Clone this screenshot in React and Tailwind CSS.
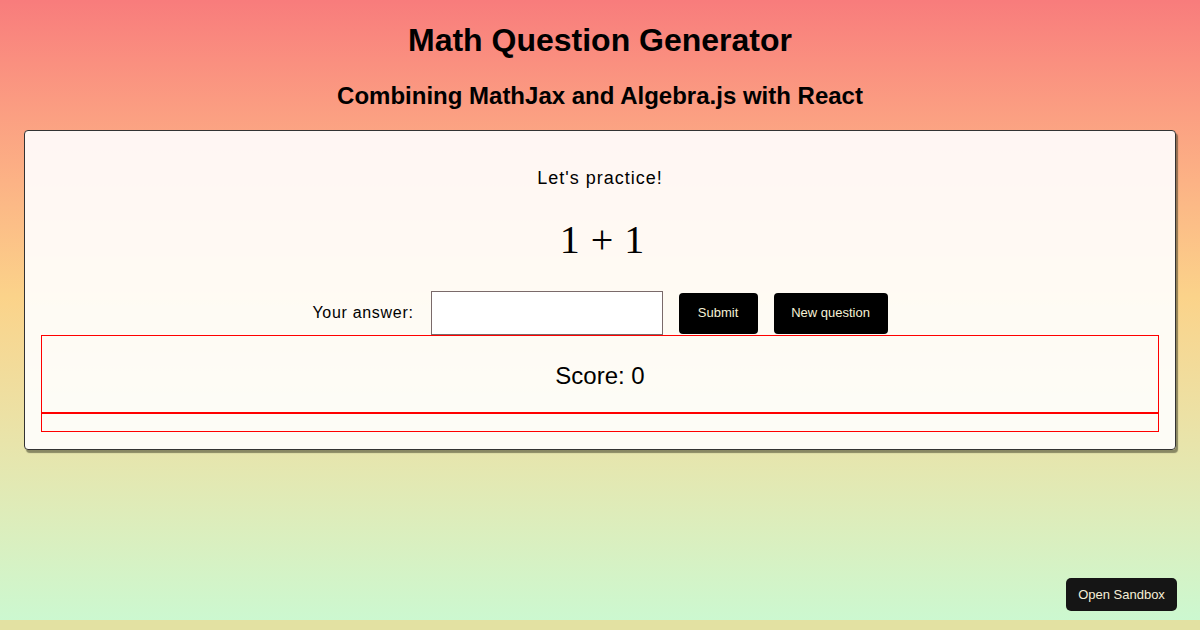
export default function App() {
  return (
    <div className="relative min-h-screen bg-[#e3e1a2] font-['Liberation_Sans',Arial,sans-serif] text-black">
      <div className="h-[620px] bg-gradient-to-b from-[#f87c7c] via-[#fbd38a] via-48% to-[#ccf8d0] pt-[20px]">
        <h1 className="text-center text-[32px] font-bold leading-[40px]">Math Question Generator</h1>
        <h2 className="mt-[20px] text-center text-[24px] font-bold leading-[32px]">
          Combining MathJax and Algebra.js with React
        </h2>

        <div className="mx-[24px] mt-[18px] rounded-[4px] border border-[#333] bg-white/90 px-[16px] pb-[17px] pt-[33px] shadow-[2px_3px_1px_rgba(60,60,40,0.55)]">
          <p className="text-center text-lg leading-[28px] tracking-[1px]">Let's practice!</p>
          <div className="mt-[24px] flex items-center justify-center pl-[4px] font-['Liberation_Serif','DejaVu_Serif',serif] text-[40px] leading-[48px]">
            <span>1</span>
            <span className="mx-[11px]">+</span>
            <span>1</span>
          </div>

          <div className="mt-[27px] flex items-center justify-center gap-[16px]">
            <label className="mr-[1px] text-base tracking-[0.7px]">Your answer:</label>
            <input
              type="text"
              className="h-[44px] w-[232px] border border-[#7a6a6a] bg-white outline-none"
            />
            <button className="h-[41px] w-[79px] rounded-[4px] bg-black text-[13px] text-[#f6f1d6]">Submit</button>
            <button className="h-[41px] w-[114px] rounded-[4px] bg-black text-[13px] text-[#f6f1d6]">New question</button>
          </div>

          <div className="border border-[#ff0000]">
            <div className="flex h-[78px] items-center justify-center border-b-2 border-[#ff0000] pt-[3px] text-[24px]">
              Score: 0
            </div>
            <div className="h-[17px]" />
          </div>
        </div>
      </div>

      <button className="absolute bottom-[19px] right-[23px] h-[33px] w-[111px] rounded-[5px] bg-[#151515] text-[13px] text-[#f5efd8]">
        Open Sandbox
      </button>
    </div>
  );
}
